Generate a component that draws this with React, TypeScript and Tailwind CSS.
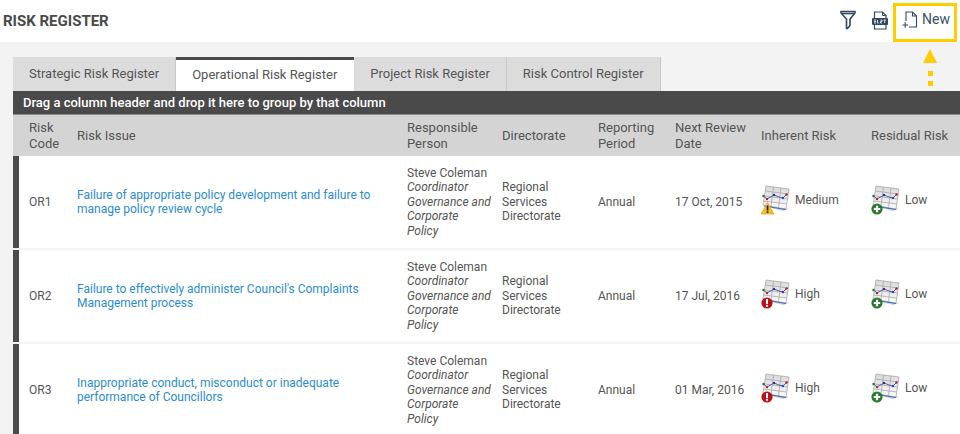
import { useId } from "react";

const columns = "grid grid-cols-[48px_330px_95px_96px_77px_86px_110px_99px]";

interface RiskRow {
  code: string;
  issue: string[];
  date: string;
  inherent: "Medium" | "High";
}

const rows: RiskRow[] = [
  {
    code: "OR1",
    issue: ["Failure of appropriate policy development and failure to", "manage policy review cycle"],
    date: "17 Oct, 2015",
    inherent: "Medium",
  },
  {
    code: "OR2",
    issue: ["Failure to effectively administer Council's Complaints", "Management process"],
    date: "17 Jul, 2016",
    inherent: "High",
  },
  {
    code: "OR3",
    issue: ["Inappropriate conduct, misconduct or inadequate", "performance of Councillors"],
    date: "01 Mar, 2016",
    inherent: "High",
  },
];

const tabs = ["Strategic Risk Register", "Operational Risk Register", "Project Risk Register", "Risk Control Register"];

// Sheet with a line chart and a small status badge in the lower left corner
const RiskIcon = ({ level }: { level: "Medium" | "High" | "Low" }) => {
  const id = useId();
  return (
    <svg width="30" height="30" viewBox="0 0 30 30" className="mb-[4px] shrink-0">
      <defs>
        <linearGradient id={id} x1="0" y1="0" x2="0" y2="1">
          <stop offset="0" stopColor="#d8d8d8" />
          <stop offset="1" stopColor="#fbfbfb" />
        </linearGradient>
      </defs>
      <path d="M3 21 L22 26 L28 24 L10 20 Z" fill="#cfcfcf" />
      <path d="M5 1 L28 4 L25 24 L2 20 Z" fill={`url(#${id})`} stroke="#a9a9a9" strokeWidth="0.8" />
      <path
        d="M12.5 2 L10 21.3 M20 3 L17.5 22.6 M4.3 6 L27.3 9 M3.6 11 L26.6 14 M2.8 16 L25.8 19"
        stroke="#a9a9a9"
        strokeWidth="0.8"
        fill="none"
      />
      <path d="M3 21 L25 24.5" stroke="#3a6fc0" strokeWidth="1.2" />
      <path d="M2.5 11 L6 14 L13 10 L18 12 L22 13 L25.5 9.5" stroke="#4a5fa8" strokeWidth="1" fill="none" />
      <circle cx="2.5" cy="11" r="1.2" fill="#1d7a2c" />
      <circle cx="6" cy="14" r="1.2" fill="#b3202a" />
      <circle cx="13" cy="10" r="1.2" fill="#3b2a8c" />
      <circle cx="22" cy="13" r="1.2" fill="#2a4aa8" />
      <circle cx="25.5" cy="9.5" r="1.2" fill="#b3202a" />
      {level === "Medium" && (
        <>
          <path d="M6.5 17.5 L13 29 L0 29 Z" fill="#f4bd2a" stroke="#d99a10" strokeWidth="0.6" />
          <rect x="5.7" y="20.5" width="1.7" height="5" fill="#222" />
          <rect x="5.7" y="26.2" width="1.7" height="1.7" fill="#222" />
        </>
      )}
      {level === "High" && (
        <>
          <circle cx="6" cy="24" r="5.6" fill="#b5121b" />
          <rect x="5" y="20" width="2" height="5.2" fill="#fff" />
          <rect x="5" y="26" width="2" height="1.8" fill="#fff" />
        </>
      )}
      {level === "Low" && (
        <>
          <circle cx="6" cy="24" r="5.6" fill="#2b7a2e" />
          <path d="M2.8 24 H9.2 M6 20.8 V27.2" stroke="#fff" strokeWidth="2.2" />
        </>
      )}
    </svg>
  );
};

const App = () => {
  return (
    <div className="h-[434px] w-[960px] overflow-hidden bg-[#f3f3f3] font-['Roboto',sans-serif] text-[#555555]">
      {/* Top bar */}
      <div className="flex h-[42px] items-end justify-between bg-white pl-[3px]">
        <h1 className="mb-[12px] text-[15px] leading-[18px] font-bold text-[#4a4a4a]">RISK REGISTER</h1>
        <div className="flex items-center">
          <svg width="16" height="20" viewBox="0 0 16 20" fill="none" stroke="#2f4a60" strokeWidth="1.6" className="mr-[16px] mb-[5px]">
            <path d="M1 1.5 H15 L15 3 L10 9 V15.5 L7.5 18.5 L6.5 18.5 V9 L1 3 Z" />
            <path d="M2 3.5 H14" />
          </svg>
          <svg width="16" height="19" viewBox="0 0 16 19" className="mr-[5px] mb-[4px]">
            <path d="M2.5 7 V1 H10.5 L14 4.5 V7 M2.5 14 V18 H14 V14" fill="none" stroke="#2f4a60" strokeWidth="1.2" />
            <path d="M10.5 1 V4.5 H14" fill="none" stroke="#2f4a60" strokeWidth="1" />
            <rect x="0" y="7" width="16" height="7" rx="1" fill="#2f4a60" />
            <path d="M2 9 H4 M2 10.5 H4 M2 12 H4 M5.5 9 V12 H7 M8.5 9 H10 V10.5 H8.5 V12 H10 M11.5 9 H14 M12.7 9 V12" stroke="#fff" strokeWidth="0.8" fill="none" />
          </svg>
          <div className="mr-[3px] flex h-[39px] w-[64px] items-center gap-[4px] border-[3px] border-[#ffcc00] pb-[6px] pl-[6px] text-[14px] text-[#3c5266]">
            <svg width="16" height="18" viewBox="0 0 16 18" fill="none" stroke="#2f4a60" strokeWidth="1.1">
              <path d="M4 10 V1 H10.5 L14.5 5 V16 H7" />
              <path d="M10.5 1 V5 H14.5" />
              <path d="M0.5 14 H6 M3.2 11.2 V16.8" />
            </svg>
            New
          </div>
        </div>
      </div>

      {/* Tabs */}
      <div className="relative ml-[13px] mt-[15px] flex h-[34px]">
        {tabs.map((tab, i) => (
          <div
            key={tab}
            className={
              i === 1
                ? "flex items-center border-t-[3px] border-[#4a4a4a] bg-white pr-[17px] pb-[1px] pl-[16px] text-[13px] text-[#555555]"
                : "flex items-center border-r border-[#c8c8c8] bg-[#dcdcdc] px-[16px] text-[13px] text-[#555555] last:border-r-0"
            }
          >
            {tab}
          </div>
        ))}
        {/* Arrow pointing at the New button */}
        <div className="absolute left-[910px] top-[-8px] flex flex-col items-center">
          <div className="h-0 w-0 border-x-[7px] border-b-[14px] border-x-transparent border-b-[#ffcc00]" />
          <div className="mt-[8px] h-[5px] w-[5px] bg-[#ffcc00]" />
          <div className="mt-[5px] h-[5px] w-[5px] bg-[#ffcc00]" />
        </div>
      </div>

      {/* Group bar */}
      <div className="ml-[13px] flex h-[24px] items-center border-b border-[#8a8a8a] bg-[#4a4a4a] pl-[10px] text-[13px] font-medium text-white">
        Drag a column header and drop it here to group by that column
      </div>

      {/* Column headers */}
      <div className={`${columns} ml-[13px] h-[41px] items-center bg-[#d4d4d4] pl-[6px] text-[13px] leading-[16px] text-[#555555]`}>
        <div className="pl-[10px]">Risk<br />Code</div>
        <div className="pl-[10px]">Risk Issue</div>
        <div className="pl-[10px]">Responsible<br />Person</div>
        <div className="pl-[10px]">Directorate</div>
        <div className="pl-[10px]">Reporting<br />Period</div>
        <div className="pl-[10px]">Next Review<br />Date</div>
        <div className="pl-[10px]">Inherent Risk</div>
        <div className="pl-[10px]">Residual Risk</div>
      </div>

      {/* Rows */}
      {rows.map((row) => (
        <div key={row.code} className="ml-[13px] h-[94px] border-b-2 border-[#f3f3f3] bg-white text-[12px] leading-[14.5px]">
          <div className={`${columns} h-full items-center border-l-[6px] border-[#4a4a4a]`}>
            <div className="pl-[10px]">{row.code}</div>
            <div className="pl-[10px] text-[#2a8ccf]">
              {row.issue.map((line) => (
                <div key={line}>{line}</div>
              ))}
            </div>
            <div className="pl-[10px]">
              <div>Steve Coleman</div>
              <div className="italic">
                Coordinator
                <br />
                Governance and
                <br />
                Corporate
                <br />
                Policy
              </div>
            </div>
            <div className="pl-[10px]">
              Regional
              <br />
              Services
              <br />
              Directorate
            </div>
            <div className="pl-[10px]">Annual</div>
            <div className="pl-[10px]">{row.date}</div>
            <div className="flex items-center gap-[4px] pl-[10px]">
              <RiskIcon level={row.inherent} />
              <span className="mb-[4px]">{row.inherent}</span>
            </div>
            <div className="flex items-center gap-[4px] pl-[10px]">
              <RiskIcon level="Low" />
              <span className="mb-[4px]">Low</span>
            </div>
          </div>
        </div>
      ))}
    </div>
  );
};

export default App;
